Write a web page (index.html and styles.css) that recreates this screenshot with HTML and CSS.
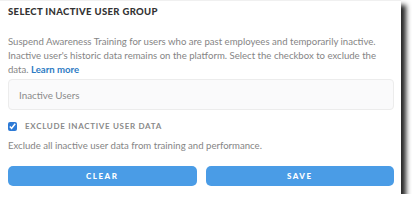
FILE: index.html
```html
<!DOCTYPE html>
<html lang="en">
<head>
  <meta charset="UTF-8">
  <title>Select inactive user group</title>
  <link rel="stylesheet" href="styles.css">
</head>
<body>
  <div class="card">
    <h2 class="card-title">Select Inactive User Group</h2>
    <p class="card-text">
      Suspend Awareness Training for users who are past employees and temporarily inactive.<br>
      Inactive user's historic data remains on the platform. Select the checkbox to exclude the<br>
      data. <a href="#" class="learn-more">Learn more</a>
    </p>
    <input class="group-input" type="text" placeholder="Inactive Users">
    <label class="check-row">
      <input type="checkbox" class="check" checked>
      <span class="check-label">Exclude Inactive User Data</span>
    </label>
    <p class="check-help">Exclude all inactive user data from training and performance.</p>
    <div class="actions">
      <button class="btn">Clear</button>
      <button class="btn">Save</button>
    </div>
  </div>
</body>
</html>
```

FILE: styles.css
```css
* {
  box-sizing: border-box;
}

body {
  margin: 0;
  background: #fff;
  font-family: Lato, 'Open Sans', sans-serif;
}

.card {
  width: 401px;
  height: 194px;
  padding: 4px 7px 8px 8px;
  background: #fff;
  border-top: 1px solid #f0f0f0;
  box-shadow: 5px 5px 5px rgba(0, 0, 0, 0.85);
}

.card-title {
  margin: 0;
  font-size: 9.5px;
  line-height: 14px;
  font-weight: 900;
  letter-spacing: 0.35px;
  text-transform: uppercase;
  color: #333;
}

.card-text {
  margin: 16px 0 0;
  font-size: 9.6px;
  line-height: 14px;
  color: #858585;
  white-space: nowrap;
}

.learn-more {
  color: #2d7cc4;
  font-weight: 700;
  text-decoration: none;
}

.group-input {
  display: block;
  width: 386px;
  height: 31px;
  margin-top: 2px;
  padding: 0 10px;
  border: 1px solid #ececec;
  border-radius: 4px;
  background: #fafafb;
  font-family: inherit;
  font-size: 9.8px;
  color: #333;
}

.group-input::placeholder {
  color: #8a8a8a;
}

.check-row {
  display: flex;
  align-items: center;
  gap: 8px;
  margin-top: 11px;
}

.check {
  margin: 0;
  width: 9px;
  height: 9px;
  accent-color: #2d7ad6;
}

.check-label {
  font-size: 8px;
  font-weight: 700;
  letter-spacing: 0.7px;
  text-transform: uppercase;
  color: #8a8a8a;
}

.check-help {
  margin: 8px 0 0;
  font-size: 9.6px;
  line-height: 14px;
  color: #858585;
}

.actions {
  display: flex;
  gap: 9px;
  margin-top: 13px;
  width: 386px;
}

.btn {
  flex: 1;
  height: 20px;
  border: none;
  border-radius: 5px;
  background: #4a9ce6;
  color: #fff;
  font-family: inherit;
  font-size: 8px;
  font-weight: 900;
  letter-spacing: 1.5px;
  text-transform: uppercase;
}
```
